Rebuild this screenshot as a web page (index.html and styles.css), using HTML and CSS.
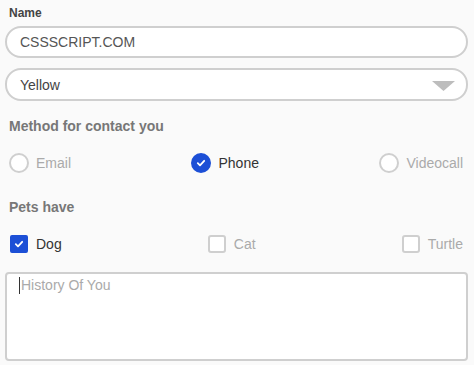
FILE: index.html
```html
<!DOCTYPE html>
<html lang="en">
<head>
<meta charset="utf-8">
<title>Form</title>
<link rel="stylesheet" href="styles.css">
</head>
<body>
<form class="form">
  <div class="label">Name</div>
  <div class="field">CSSSCRIPT.COM</div>
  <div class="field select">
    <span>Yellow</span>
    <svg class="arrow" width="23" height="10" viewBox="0 0 23 10"><polygon points="0,0 23,0 11.5,10" fill="#bdbdbd"/></svg>
  </div>

  <div class="heading">Method for contact you</div>
  <div class="row radios">
    <div class="opt off"><span class="radio"></span><span>Email</span></div>
    <div class="opt on"><span class="radio checked"><svg width="12" height="12" viewBox="0 0 12 12"><polyline points="2.8,6.2 5,8.3 9.2,3.8" fill="none" stroke="#fff" stroke-width="1.8" stroke-linecap="round" stroke-linejoin="round"/></svg></span><span>Phone</span></div>
    <div class="opt off"><span class="radio"></span><span>Videocall</span></div>
  </div>

  <div class="heading pets">Pets have</div>
  <div class="row checks">
    <div class="opt on"><span class="box checked"><svg width="12" height="12" viewBox="0 0 12 12"><polyline points="2.8,6.2 5,8.3 9.2,3.8" fill="none" stroke="#fff" stroke-width="1.8" stroke-linecap="round" stroke-linejoin="round"/></svg></span><span>Dog</span></div>
    <div class="opt off"><span class="box"></span><span>Cat</span></div>
    <div class="opt off"><span class="box"></span><span>Turtle</span></div>
  </div>

  <div class="textarea"><span class="caret"></span><span class="placeholder">History Of You</span></div>
</form>
</body>
</html>
```
FILE: styles.css
```css
html, body {
  margin: 0;
  padding: 0;
  background: #fafafa;
}
body {
  font-family: "Liberation Sans", Arial, sans-serif;
  font-size: 14px;
  line-height: 16px;
}
.form {
  padding: 0 6px 0 5px;
  display: flex;
  flex-direction: column;
}
.label {
  font-size: 12px;
  line-height: 14px;
  font-weight: bold;
  color: #444;
  margin: 6px 0 6px 4px;
}
.field {
  box-sizing: border-box;
  height: 32px;
  border: 2px solid #cfcfcf;
  border-radius: 16px;
  background: #fff;
  padding: 0 11px 0 13px;
  display: flex;
  align-items: center;
  color: #555;
  margin-bottom: 10px;
}
.select {
  height: 33px;
  justify-content: space-between;
  color: #444;
  margin-bottom: 0;
}
.arrow {
  display: block;
  margin-top: 2px;
}
.heading {
  font-size: 14px;
  line-height: 16px;
  font-weight: bold;
  color: #777;
  margin: 17px 0 19px 4px;
}
.heading.pets {
  margin-top: 26px;
  margin-bottom: 20px;
}
.row {
  display: flex;
  justify-content: space-between;
  align-items: center;
  padding: 0 5px 0 4px;
}
.radios { height: 20px; }
.checks { height: 18px; padding-left: 5px; padding-right: 5px; }
.opt {
  display: flex;
  align-items: center;
  gap: 7px;
}
.checks .opt { gap: 8px; }
.opt.off { color: #aaa; }
.opt.on { color: #333; }
.radio {
  box-sizing: border-box;
  width: 20px;
  height: 20px;
  border: 2px solid #cfcfcf;
  border-radius: 50%;
  background: #fff;
  display: flex;
  align-items: center;
  justify-content: center;
}
.radio.checked, .box.checked {
  background: #1c4fd6;
  border-color: #1c4fd6;
}
.box {
  box-sizing: border-box;
  width: 18px;
  height: 18px;
  border: 2px solid #cfcfcf;
  border-radius: 3px;
  background: #fff;
  display: flex;
  align-items: center;
  justify-content: center;
}
.box.checked { border-radius: 2px; }
.radio svg, .box svg { display: block; }
.textarea {
  box-sizing: border-box;
  height: 89px;
  margin-top: 19px;
  border: 2px solid #cfcfcf;
  border-radius: 4px;
  background: #fff;
  padding: 3px 10px 0 12px;
  display: flex;
  align-items: flex-start;
  color: #aaa;
}
.caret {
  width: 1px;
  height: 17px;
  background: #333;
  margin-right: 1px;
}
```
